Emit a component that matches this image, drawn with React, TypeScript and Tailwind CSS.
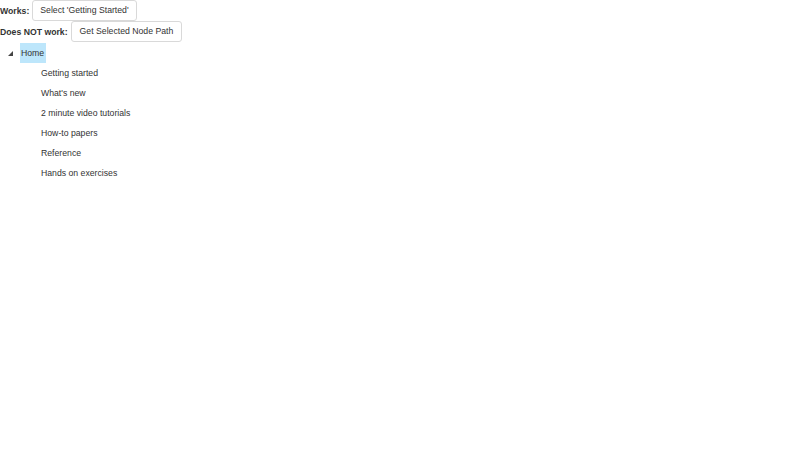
import React from 'react'

const items = [
  'Getting started',
  "What's new",
  '2 minute video tutorials',
  'How-to papers',
  'Reference',
  'Hands on exercises',
]

export default function App() {
  return (
    <div className="min-h-[450px] bg-white text-[8.7px] text-[#333] font-['Liberation_Sans',Arial,sans-serif]">
      <div className="flex h-[21px] items-center">
        <span className="font-bold pr-[3px] pt-[2px]">Works:</span>
        <button className="h-[21px] pt-[1px] px-[7px] border border-[#d9d9d9] rounded-[3px] bg-white text-[#333]">
          Select 'Getting Started'
        </button>
      </div>
      <div className="flex h-[21px] items-center">
        <span className="font-bold pr-[3px] pt-[2px]">Does NOT work:</span>
        <button className="h-[21px] pt-[1px] px-[8px] border border-[#d9d9d9] rounded-[3px] bg-white text-[#333]">
          Get Selected Node Path
        </button>
      </div>
      <div className="pt-[1px]">
        <div className="flex h-[20px] items-center">
          <span className="w-[20px] flex justify-center pt-[1px]">
            <svg width="5" height="5" viewBox="0 0 5 5">
              <polygon points="5,0 5,5 0,5" fill="#444" />
            </svg>
          </span>
          <span className="h-[20px] flex items-center pt-[1px] pl-[1px] pr-[2px] bg-[#bde6fb]">Home</span>
        </div>
        {items.map(item => (
          <div key={item} className="flex h-[20px] items-center pt-[2px] pl-[41px]">
            {item}
          </div>
        ))}
      </div>
    </div>
  )
}
